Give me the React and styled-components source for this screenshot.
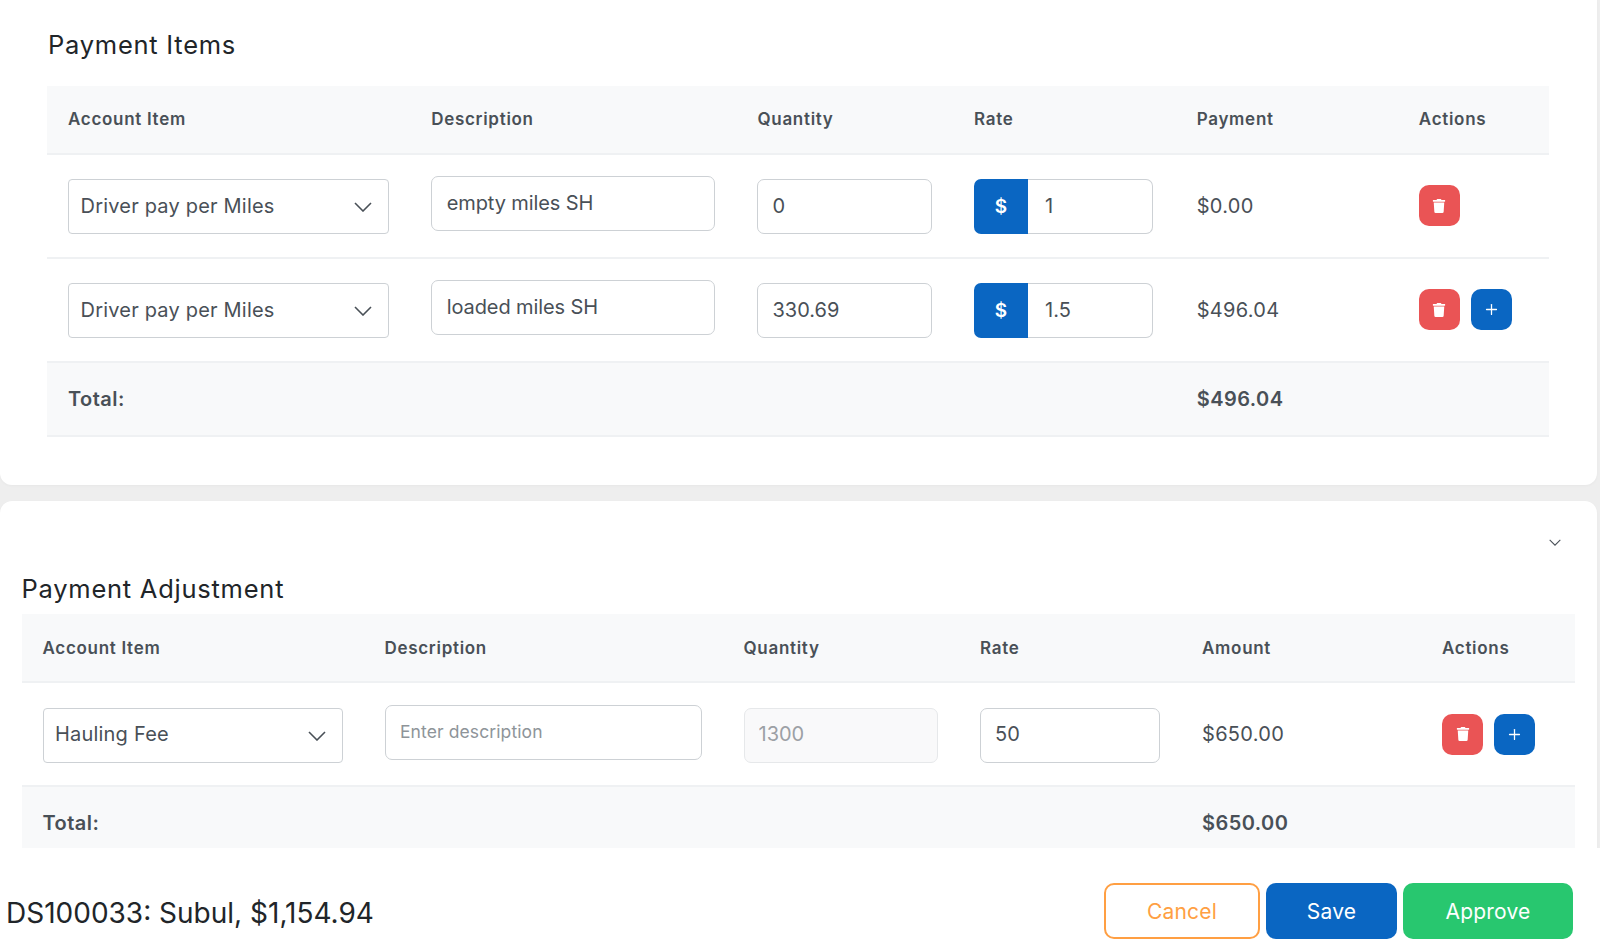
import React from 'react';
import styled, { createGlobalStyle } from 'styled-components';
import { FaTrash } from 'react-icons/fa';
import { Plus } from 'lucide-react';

const GlobalStyle = createGlobalStyle`
  html, body {
    margin: 0;
    padding: 0;
    background: #ffffff;
  }
  * {
    box-sizing: border-box;
  }
`;

const Page = styled.div`
  width: 1600px;
  height: 951px;
  overflow: hidden;
  font-family: Inter, "Liberation Sans", sans-serif;
  color: #495057;
`;

const Scroller = styled.div`
  height: 848px;
  overflow: hidden;
  background: #eeeeee;
  display: flex;
  flex-direction: column;
  gap: 16px;
`;

const Card = styled.section`
  margin-right: 3px;
  background: #ffffff;
  flex: none;
  padding: ${(p) => p.$padding};
  border-radius: ${(p) => p.$radius};
  box-shadow: 0 1px 3px rgba(0, 0, 0, 0.03);
`;

const Heading = styled.h2`
  margin: 0 0 ${(p) => p.$gap}px ${(p) => p.$indent || 0}px;
  font-family: Inter, sans-serif;
  font-size: 25.5px;
  line-height: 30px;
  font-weight: 400;
  letter-spacing: 0.75px;
  color: #212529;
`;

const Collapse = styled.div`
  display: flex;
  justify-content: flex-end;
  align-items: center;
  height: 22px;
  padding-right: 14px;
  margin-bottom: 20px;
  color: #495057;
`;

const Table = styled.table`
  width: 100%;
  table-layout: fixed;
  border-collapse: collapse;
  font-size: 20px;
`;

const HeadCell = styled.th`
  height: 68px;
  padding: 0 21px;
  text-align: left;
  font-size: 17px;
  font-weight: 600;
  letter-spacing: 0.7px;
  color: #495057;
  background: #f8f9fa;
  border-bottom: 2px solid #eff1f3;
`;

const Cell = styled.td`
  height: 104px;
  padding: 0 21px;
  vertical-align: middle;
  font-size: 20px;
  letter-spacing: 0.3px;
  border-bottom: 2px solid #eff1f3;
`;

const TotalCell = styled.td`
  height: 74px;
  padding: 0 21px;
  font-size: 20px;
  font-weight: 600;
  letter-spacing: 0.45px;
  background: #f8f9fa;
  border-bottom: 2px solid #eff1f3;
`;

const SelectWrap = styled.div`
  position: relative;
  height: 55px;
  margin-top: 2px;
  color: #495057;

  svg {
    position: absolute;
    right: 17px;
    top: 23px;
    pointer-events: none;
  }
`;

const Select = styled.select`
  width: 100%;
  height: 100%;
  appearance: none;
  padding: 0 40px 2px 11.5px;
  font-family: Inter, sans-serif;
  font-size: 20px;
  letter-spacing: 0.2px;
  color: #495057;
  background: #ffffff;
  border: 1.5px solid #cdd1d5;
  border-radius: 4px;
`;

const Input = styled.input`
  display: block;
  width: 100%;
  height: 55px;
  margin-top: 2px;
  padding: 0 14px 2px;
  font-family: Inter, sans-serif;
  font-size: 20px;
  letter-spacing: 0;
  color: #495057;
  background: #ffffff;
  border: 1.5px solid #cdd1d5;
  border-radius: 7px;
  outline: none;

  &:disabled {
    color: #9ca0a5;
    background: #f9f9fa;
    border-color: #e6e8ea;
  }
`;

const DescInput = styled(Input)`
  margin-top: -4px;
  padding: 0 14.5px 2px;
  letter-spacing: -0.1px;

  &::placeholder {
    font-size: 17.5px;
    letter-spacing: 0.1px;
    color: #8e9499;
    opacity: 1;
  }
`;

const RateGroup = styled.div`
  display: flex;
  height: 55px;
  margin: 2px 1.5px 0 0;

  ${Input} {
    flex: 1;
    min-width: 0;
    margin-top: 0;
    border-left: none;
    border-radius: 0 7px 7px 0;
    padding-left: 17px;
  }
`;

const Addon = styled.span`
  display: flex;
  flex: none;
  align-items: center;
  justify-content: center;
  width: 54px;
  font-size: 19px;
  font-weight: 600;
  color: #ffffff;
  background: #0a66c2;
  border-radius: 7px 0 0 7px;
`;

const Actions = styled.div`
  display: flex;
  gap: 11px;
`;

const IconButton = styled.button`
  display: flex;
  align-items: center;
  justify-content: center;
  width: 41px;
  height: 41px;
  padding: 0;
  color: #ffffff;
  background: ${(p) => p.$bg};
  border: none;
  border-radius: 10px;
`;

const Footer = styled.footer`
  display: flex;
  align-items: center;
  justify-content: space-between;
  height: 103px;
  padding: 35px 27px 12px 6px;
  background: #ffffff;
`;

const Summary = styled.div`
  margin-top: 4px;
  font-size: 28px;
  font-weight: 400;
  letter-spacing: 0;
  color: #212529;
`;

const ButtonRow = styled.div`
  display: flex;
  gap: 6px;
`;

const FooterButton = styled.button`
  width: ${(p) => p.$width}px;
  height: 56px;
  padding: 0;
  font-family: Inter, sans-serif;
  font-size: 21px;
  letter-spacing: 0.2px;
  color: ${(p) => p.$color};
  background: ${(p) => p.$bg};
  border: ${(p) => (p.$outline ? `2px solid ${p.$outline}` : 'none')};
  border-radius: 10px;
`;

const Chevron = ({ width, height }) => (
  <svg width={width} height={height} viewBox="0 0 18 10" fill="none" stroke="currentColor" strokeWidth="1.6">
    <path d="M1 1l8 8 8-8" />
  </svg>
);

const itemCols = [363, 326, 216.5, 222.5, 222, 151];
const adjustCols = [342, 359, 236.5, 222, 240, 154];

const items = [
  { desc: 'empty miles SH', qty: '0', rate: '1', payment: '$0.00', last: false },
  { desc: 'loaded miles SH', qty: '330.69', rate: '1.5', payment: '$496.04', last: true },
];

const AccountSelect = ({ value }) => (
  <SelectWrap>
    <Select defaultValue={value}>
      <option>{value}</option>
    </Select>
    <Chevron width={18} height={10} />
  </SelectWrap>
);

const RowActions = ({ withAdd }) => (
  <Actions>
    <IconButton $bg="#ea5455">
      <FaTrash size={14} />
    </IconButton>
    {withAdd && (
      <IconButton $bg="#0a66c2">
        <Plus size={17} strokeWidth={1.8} />
      </IconButton>
    )}
  </Actions>
);

const ColGroup = ({ widths }) => (
  <colgroup>
    {widths.map((w, i) => (
      <col key={i} width={w} />
    ))}
  </colgroup>
);

const App = () => {
  return (
    <Page>
      <GlobalStyle />
      <Scroller>
        <Card $padding="30px 48px 48px 47px" $radius="0 0 12px 12px">
          <Heading $gap={25.5} $indent={1}>Payment Items</Heading>
          <Table>
            <ColGroup widths={itemCols} />
            <thead>
              <tr>
                <HeadCell>Account Item</HeadCell>
                <HeadCell>Description</HeadCell>
                <HeadCell>Quantity</HeadCell>
                <HeadCell>Rate</HeadCell>
                <HeadCell>Payment</HeadCell>
                <HeadCell>Actions</HeadCell>
              </tr>
            </thead>
            <tbody>
              {items.map((item) => (
                <tr key={item.desc}>
                  <Cell>
                    <AccountSelect value="Driver pay per Miles" />
                  </Cell>
                  <Cell>
                    <DescInput defaultValue={item.desc} />
                  </Cell>
                  <Cell>
                    <Input defaultValue={item.qty} />
                  </Cell>
                  <Cell>
                    <RateGroup>
                      <Addon>$</Addon>
                      <Input defaultValue={item.rate} />
                    </RateGroup>
                  </Cell>
                  <Cell>{item.payment}</Cell>
                  <Cell>
                    <RowActions withAdd={item.last} />
                  </Cell>
                </tr>
              ))}
              <tr>
                <TotalCell colSpan={4}>Total:</TotalCell>
                <TotalCell colSpan={2}>$496.04</TotalCell>
              </tr>
            </tbody>
          </Table>
        </Card>

        <Card $padding="31px 22px 0 21.5px" $radius="12px 12px 0 0">
          <Collapse>
            <Chevron width={12} height={7} />
          </Collapse>
          <Heading $gap={10.5}>Payment Adjustment</Heading>
          <Table>
            <ColGroup widths={adjustCols} />
            <thead>
              <tr>
                <HeadCell>Account Item</HeadCell>
                <HeadCell>Description</HeadCell>
                <HeadCell>Quantity</HeadCell>
                <HeadCell>Rate</HeadCell>
                <HeadCell>Amount</HeadCell>
                <HeadCell>Actions</HeadCell>
              </tr>
            </thead>
            <tbody>
              <tr>
                <Cell>
                  <AccountSelect value="Hauling Fee" />
                </Cell>
                <Cell>
                  <DescInput placeholder="Enter description" />
                </Cell>
                <Cell>
                  <Input defaultValue="1300" disabled />
                </Cell>
                <Cell>
                  <Input defaultValue="50" />
                </Cell>
                <Cell>$650.00</Cell>
                <Cell>
                  <RowActions withAdd />
                </Cell>
              </tr>
              <tr>
                <TotalCell colSpan={4}>Total:</TotalCell>
                <TotalCell colSpan={2}>$650.00</TotalCell>
              </tr>
            </tbody>
          </Table>
        </Card>
      </Scroller>

      <Footer>
        <Summary>DS100033: Subul, $1,154.94</Summary>
        <ButtonRow>
          <FooterButton $width={156} $color="#ff9f43" $bg="#ffffff" $outline="#ff9f43">
            Cancel
          </FooterButton>
          <FooterButton $width={131} $color="#ffffff" $bg="#0a66c2">
            Save
          </FooterButton>
          <FooterButton $width={170} $color="#ffffff" $bg="#28c76f">
            Approve
          </FooterButton>
        </ButtonRow>
      </Footer>
    </Page>
  );
};

export default App;
